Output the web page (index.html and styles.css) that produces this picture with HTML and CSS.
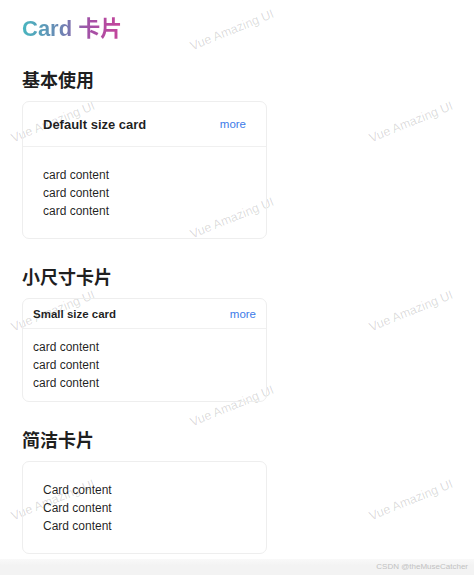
FILE: index.html
```html
<!DOCTYPE html>
<html lang="zh-CN">
<head>
<meta charset="utf-8">
<title>Card 卡片</title>
<link rel="stylesheet" href="styles.css">
</head>
<body>
<div class="watermark" aria-hidden="true">
  <span class="wm wm-a1">Vue Amazing UI</span>
  <span class="wm wm-a2">Vue Amazing UI</span>
  <span class="wm wm-a3">Vue Amazing UI</span>
  <span class="wm wm-b1">Vue Amazing UI</span>
  <span class="wm wm-b2">Vue Amazing UI</span>
  <span class="wm wm-b3">Vue Amazing UI</span>
  <span class="wm wm-c1">Vue Amazing UI</span>
  <span class="wm wm-c2">Vue Amazing UI</span>
  <span class="wm wm-c3">Vue Amazing UI</span>
</div>

<main class="page">
  <h1 class="page-title"><span class="gradient-text">Card 卡片</span></h1>

  <section class="section">
    <h2 class="section-title">基本使用</h2>
    <div class="card">
      <div class="card-head">
        <span class="card-title">Default size card</span>
        <a class="card-extra" href="#">more</a>
      </div>
      <div class="card-body">
        <p>card content</p>
        <p>card content</p>
        <p>card content</p>
      </div>
    </div>
  </section>

  <section class="section">
    <h2 class="section-title">小尺寸卡片</h2>
    <div class="card card-small">
      <div class="card-head">
        <span class="card-title">Small size card</span>
        <a class="card-extra" href="#">more</a>
      </div>
      <div class="card-body">
        <p>card content</p>
        <p>card content</p>
        <p>card content</p>
      </div>
    </div>
  </section>

  <section class="section">
    <h2 class="section-title">简洁卡片</h2>
    <div class="card">
      <div class="card-body card-body-plain">
        <p>Card content</p>
        <p>Card content</p>
        <p>Card content</p>
      </div>
    </div>
  </section>
</main>

<footer class="credit">CSDN @theMuseCatcher</footer>
</body>
</html>
```
FILE: styles.css
```css
* {
  box-sizing: border-box;
}

html,
body {
  margin: 0;
  padding: 0;
  background: #ffffff;
}

body {
  position: relative;
  min-height: 575px;
  font-family: "Liberation Sans", "Noto Sans CJK SC", sans-serif;
  color: rgba(0, 0, 0, 0.88);
}

/* ---------- page ---------- */
.page {
  position: relative;
  z-index: 1;
  padding: 14px 22px 0;
}

.page-title {
  margin: 0 0 24px;
  font-size: 22px;
  line-height: 30px;
  font-weight: 700;
}

.gradient-text {
  background-image: linear-gradient(90deg, #48b6bf 0%, #6a86b4 38%, #a450a6 68%, #c6449a 100%);
  -webkit-background-clip: text;
  background-clip: text;
  color: transparent;
}

.section + .section {
  margin-top: 26px;
}

.section-title {
  margin: 0 0 7px;
  font-size: 18px;
  line-height: 26px;
  font-weight: 700;
  color: rgba(0, 0, 0, 0.88);
}

/* ---------- card ---------- */
.card {
  width: 245px;
  border: 1px solid #eeeeee;
  border-radius: 7px;
  background: transparent;
}

.card-head {
  display: flex;
  align-items: center;
  justify-content: space-between;
  height: 45px;
  padding: 0 20px;
  border-bottom: 1px solid #f0f0f0;
}

.card-title {
  font-size: 13px;
  font-weight: 700;
  color: rgba(0, 0, 0, 0.88);
}

.card-extra {
  font-size: 11.5px;
  color: #3d7be8;
  text-decoration: none;
}

.card-body {
  padding: 19px 20px 18px;
}

.card-body p {
  margin: 0;
  font-size: 12px;
  line-height: 18px;
}

.card-small .card-head {
  height: 30px;
  padding: 0 10px;
}

.card-small .card-title {
  font-size: 11.5px;
}

.card-small .card-body {
  padding: 9px 10px;
}

.card-body-plain {
  padding: 19px 20px 18px;
}

/* ---------- watermark layer ---------- */
.watermark {
  position: absolute;
  inset: 0;
  overflow: hidden;
  pointer-events: none;
  z-index: 0;
}

.wm {
  position: absolute;
  white-space: nowrap;
  font-family: "Liberation Sans", sans-serif;
  font-size: 12.5px;
  line-height: 14px;
  color: rgba(0, 0, 0, 0.15);
  transform: translate(-50%, -50%) rotate(-22deg);
}

.wm-a1 { left: 232px; top: 30px; }
.wm-a2 { left: 232px; top: 218px; }
.wm-a3 { left: 232px; top: 406px; }
.wm-b1 { left: 411px; top: 122px; }
.wm-b2 { left: 411px; top: 311px; }
.wm-b3 { left: 411px; top: 500px; }
.wm-c1 { left: 53px; top: 122px; }
.wm-c2 { left: 53px; top: 311px; }
.wm-c3 { left: 53px; top: 500px; }

/* ---------- credit strip ---------- */
.credit {
  position: absolute;
  left: 0;
  right: 0;
  bottom: 0;
  height: 16px;
  padding-right: 6px;
  text-align: right;
  font-family: "Liberation Sans", sans-serif;
  font-size: 8px;
  line-height: 16px;
  color: #c2c2c2;
  background: linear-gradient(180deg, rgba(240, 240, 240, 0.4) 0%, #f3f3f3 40%, #f3f3f3 100%);
}
```
